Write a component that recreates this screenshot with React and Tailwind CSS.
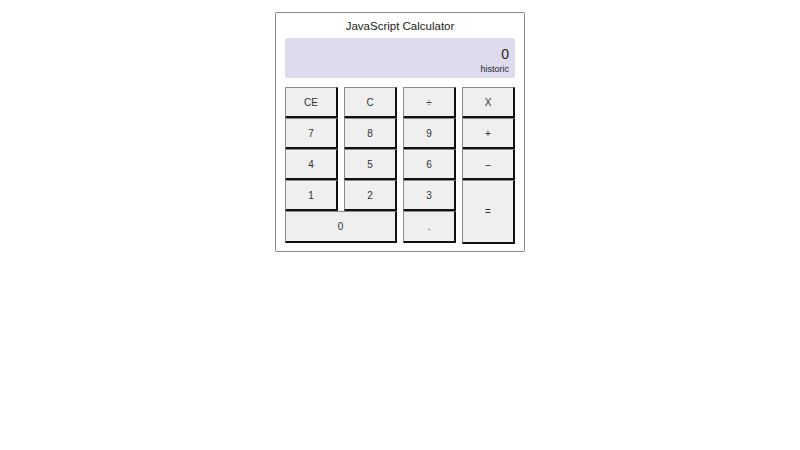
export default function App() {
  const btn =
    "flex items-center justify-center bg-[#efefef] text-[#333] text-[10px] border-t border-l border-b-2 border-r-2 border-t-[#8a8a8a] border-l-[#8a8a8a] border-b-[#111] border-r-[#111] rounded-[1px]";
  return (
    <div className="w-full min-h-[450px] bg-white" style={{ fontFamily: '"Liberation Sans", Arial, sans-serif' }}>
      <div className="mx-auto mt-[12px] w-[250px] border border-[#8c8c8c] rounded-[2px] px-[9px] pb-[8px] pt-[5px]">
        <div className="text-center text-[11.5px] leading-[16px] text-[#1a1a1a] h-[20px]">JavaScript Calculator</div>
        <div className="bg-[#dfdbee] rounded-[2px] h-[40px] flex flex-col items-end justify-center pr-[6px] pt-[4px]">
          <div className="text-[14px] leading-[16px] text-[#222]">0</div>
          <div className="text-[9px] leading-[12px] text-[#222] mt-[1px]">historic</div>
        </div>
        <div className="grid grid-cols-4 gap-x-[6px] grid-rows-[31px_31px_31px_31px_32px] mt-[9px]">
          <button className={btn}>CE</button>
          <button className={btn}>C</button>
          <button className={btn}>÷</button>
          <button className={btn}>X</button>
          <button className={btn}>7</button>
          <button className={btn}>8</button>
          <button className={btn}>9</button>
          <button className={btn}>+</button>
          <button className={btn}>4</button>
          <button className={btn}>5</button>
          <button className={btn}>6</button>
          <button className={btn}>–</button>
          <button className={btn}>1</button>
          <button className={btn}>2</button>
          <button className={btn}>3</button>
          <button className={btn + " row-span-2 h-[64px]"}>=</button>
          <button className={btn + " col-span-2"}>0</button>
          <button className={btn}>.</button>
        </div>
      </div>
    </div>
  );
}
